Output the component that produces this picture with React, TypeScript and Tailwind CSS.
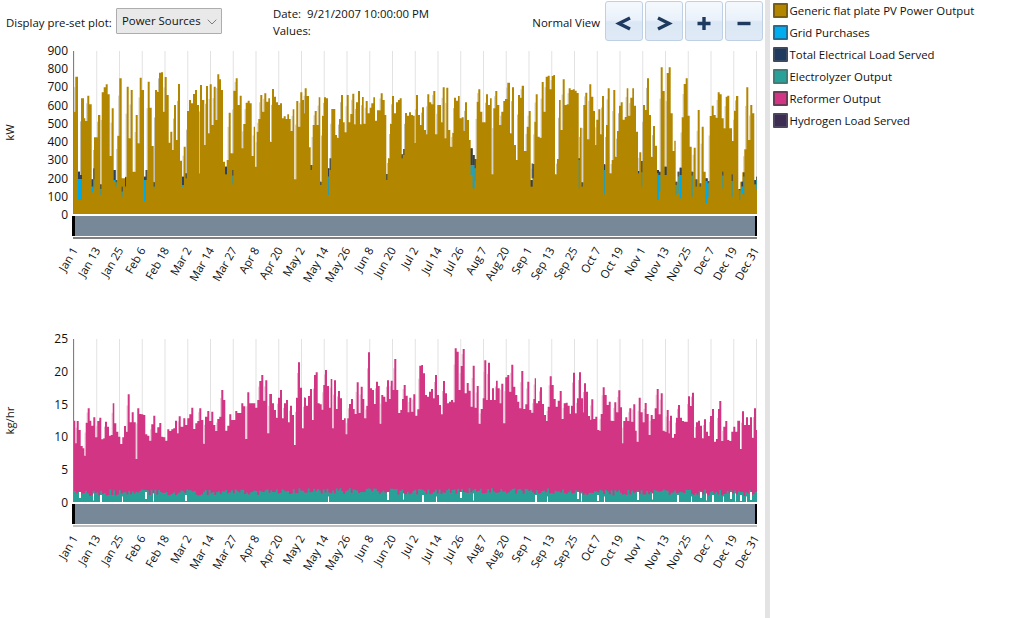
import { ChevronDown } from "lucide-react";

const FONT = "font-['Open_Sans','Noto_Sans',sans-serif]";

const DATES = [
  "Jan 1", "Jan 13", "Jan 25", "Feb 6", "Feb 18", "Mar 2", "Mar 14", "Mar 27", "Apr 8", "Apr 20", "May 2",
  "May 14", "May 26", "Jun 8", "Jun 20", "Jul 2", "Jul 14", "Jul 26", "Aug 7", "Aug 20", "Sep 1", "Sep 13",
  "Sep 25", "Oct 7", "Oct 19", "Nov 1", "Nov 13", "Nov 25", "Dec 7", "Dec 19", "Dec 31",
];

const LEGEND = [
  { label: "Generic flat plate PV Power Output", cls: "bg-[#b38600] border-[#7a5f10]" },
  { label: "Grid Purchases", cls: "bg-[#00aeef] border-[#1f6f96]" },
  { label: "Total Electrical Load Served", cls: "bg-[#1f3a5f] border-[#3b4a60]" },
  { label: "Electrolyzer Output", cls: "bg-[#2aa198] border-[#3f7f7a]" },
  { label: "Reformer Output", cls: "bg-[#d23583] border-[#6d3a58]" },
  { label: "Hydrogen Load Served", cls: "bg-[#3e2d53] border-[#4e4560]" },
];

// silhouettes read off the reference, "x:y" in crop pixels per strip
const POWER = [
  { x0: 70, s: "10:200 16:95 24:380 30:390 33:160 42:220 46:228 52:152 58:178 65:403 72:277 84:210 91:418 95:142 101:127 107:118 113:148 119:333 125:190 131:375 137:405 142:272 148:100 155:400 160:400 165:395 170:125 176:280 182:135 188:380 197:210 203:295 209:98 215:135 222:395 227:375 233:110 239:188 245:303 251:410 255:135 261:140 267:83 273:82 279:200 284:96 290:150 296:293 301:260 307:315 312:180 318:285 324:117 330:347 336:395 341:305 347:385 351:198 357:165 363:175 369:147 375:135 381:180 387:385 390:120 396:165 403:300 408:123 414:265 419:118 425:240 431:125 437:225 442:88 448:103 453:135 459:350 465:365 470:345 476:203 482:325 490:137 497:100 503:180 509:152 515:310 520:237 527:173 533:167 539:175 545:333 551:245 555:365 560:260 565:222 571:150 577:200 583:145 589:170 595:160 600:290 606:132 612:155 618:172 624:180 630:175 636:220 641:214 647:222 652:208 657:222 662:258 668:193 673:403 679:168 685:245 691:142 697:165 702:205" },
  { x0: 300, s: "14:130 20:153 27:307 32:360 38:240 44:198 50:240 56:157 61:410 66:212 72:157 78:160 84:370 89:340 94:192 100:192 106:270 111:278 117:222 123:150 129:232 134:262 140:150 146:232 151:207 157:146 163:238 168:172 174:138 180:238 186:156 191:236 197:168 203:205 209:188 214:175 220:157 225:227 231:196 237:196 242:145 248:165 254:210 259:387 264:340 270:236 276:153 282:205 288:172 294:165 299:160 305:328 310:312 315:204 321:212 327:202 333:210 339:212 344:294 348:150 354:210 360:240 366:187 372:255 378:268 382:148 388:172 394:178 400:138 406:268 412:180 417:180 423:232 428:127 434:280 439:128 445:255 451:305 457:263 462:158 468:167 474:153 479:220 485:217 491:257 495:172 501:225 507:285 512:310 518:330 524:342 530:170 535:133 541:200 547:232 552:232 558:148 564:180 570:160 575:388 580:190 586:138 592:180 598:240 604:200 610:168 615:162 622:113 630:265 636:127 642:300 648:345 654:150 660:158 665:122 672:318 680:245 686:198 692:405 698:357 703:230" },
  { x0: 530, s: "5:355 11:230 17:148 23:275 29:278 35:111 41:200 47:95 53:92 59:133 65:93 70:90 75:388 81:342 87:165 92:255 98:103 104:180 110:178 116:130 122:135 128:133 134:137 140:144 146:340 150:248 155:412 160:180 166:143 172:283 178:118 184:155 190:198 195:300 199:224 205:193 211:268 216:153 222:358 228:240 233:130 239:385 245:345 250:135 256:335 261:258 267:182 272:172 278:224 284:216 290:130 295:212 301:158 307:130 312:182 318:260 324:378 328:322 334:348 339:180 345:195 351:100 357:210 363:335 369:243 375:302 381:375 385:380 392:67 398:138 404:365 410:84 416:67 422:205 428:318 433:287 437:410 443:380 449:368 455:217 461:117 467:100 473:212 479:305 485:380 491:308 497:403 503:195 509:415 515:245 521:380 527:400 533:408 539:213 545:182 551:210 557:218 563:142 569:148 575:220 581:250 587:155 592:152 598:250 606:288 612:197 618:153 625:432 631:410 637:382 643:313 649:127 655:285 661:180 667:205 673:405 679:395" },
];

const HYDROGEN = [
  { x0: 70, s: "10:257 16:325 20:258 26:285 32:333 38:340 43:362 47:263 53:220 59:257 64:272 70:247 76:307 82:258 88:248 94:313 100:310 105:260 111:275 117:302 122:300 128:205 133:265 139:290 145:305 151:327 157:307 162:273 168:290 173:178 179:262 185:232 191:262 197:372 202:220 208:237 214:238 220:240 226:298 232:302 238:317 244:268 250:242 256:293 262:277 268:264 274:305 280:307 286:317 292:283 298:288 304:283 310:280 315:257 321:295 326:244 332:275 340:250 346:270 352:250 358:238 364:218 370:282 376:265 382:258 388:220 394:255 400:326 405:245 412:228 418:258 424:230 430:270 436:288 442:252 448:245 454:165 460:195 466:287 472:272 478:238 484:255 490:255 496:228 502:234 508:234 514:205 520:214 526:312 532:172 538:205 544:205 550:205 556:218 562:195 568:138 574:120 580:197 586:136 592:295 598:177 606:205 612:225 618:248 624:188 630:165 636:250 642:205 648:195 654:262 660:212 666:240 672:330 678:188 684:82 690:158 696:280 702:187" },
  { x0: 300, s: "14:188 18:212 24:183 30:162 36:255 42:120 47:112 53:205 59:208 65:224 70:150 75:105 81:153 87:218 92:132 97:280 102:136 108:222 114:168 120:190 126:255 132:250 137:298 142:250 147:207 153:192 159:222 164:237 170:142 176:234 182:155 188:192 193:250 199:212 204:52 210:160 216:165 222:207 228:140 234:153 239:266 244:180 250:185 256:200 261:136 267:192 272:137 278:165 283:72 289:165 295:234 301:225 306:192 311:150 317:182 323:232 328:188 334:230 340:178 346:242 352:223 358:92 364:90 369:115 375:180 381:185 387:170 393:162 399:190 405:120 411:180 417:210 423:238 429:138 435:175 441:205 447:200 453:195 459:202 464:40 470:50 476:165 482:93 488:42 494:175 500:144 506:167 512:215 518:92 524:218 530:153 536:266 542:222 548:190 553:76 559:195 564:83 570:195 576:160 582:195 588:137 593:160 599:205 604:146 610:265 616:127 622:120 628:170 634:89 640:155 646:180 652:200 658:220 664:108 670:222 676:208 682:140 688:225 694:233 700:192 704:130" },
  { x0: 530, s: "6:192 12:130 18:205 24:198 30:157 36:207 42:240 48:258 53:215 59:124 65:150 71:192 77:215 83:197 89:168 95:252 101:205 107:203 113:212 119:236 123:212 129:113 135:235 141:190 147:112 153:190 159:232 162:145 168:170 174:243 180:254 184:193 190:252 196:245 202:285 208:287 212:237 218:157 224:180 230:210 236:200 242:257 248:258 253:202 259:232 265:166 271:217 276:325 280:258 286:247 292:258 298:220 304:260 310:208 316:287 320:320 326:188 332:232 338:262 344:204 350:237 356:300 362:240 368:252 374:220 380:162 386:238 392:175 398:287 404:290 410:225 416:295 420:242 426:308 432:297 438:248 444:210 450:248 456:258 462:260 468:260 474:184 480:213 486:173 492:308 498:262 504:257 510:272 516:310 522:253 528:290 534:303 540:243 546:222 552:320 558:312 564:222 568:198 574:318 580:275 586:258 592:315 598:318 604:290 610:275 616:290 622:257 630:342 636:229 642:270 648:247 654:270 660:247 666:308 672:220 678:285" },
];

// x0, crop x, navy top, blue top, gold top, width
const DIPS: number[][] = [
  [70, 24, 380, 402, 465, 2], [70, 30, 390, 402, 465, 2], [70, 65, 403, 425, 442, 2], [70, 70, 370, 403, 430, 1],
  [70, 91, 418, 432, 450, 1], [70, 131, 375, 405, 408, 2], [70, 137, 405, 412, 425, 1], [70, 155, 425, 440, 455, 1],
  [70, 165, 397, 425, 428, 1], [70, 222, 395, 405, 470, 2], [70, 227, 375, 405, 405, 1], [70, 251, 412, 425, 430, 1],
  [70, 336, 395, 420, 425, 2], [70, 347, 385, 400, 400, 1], [70, 465, 365, 388, 388, 2], [70, 487, 375, 392, 418, 1],
  [300, 32, 360, 375, 375, 1], [300, 61, 410, 420, 420, 1], [300, 84, 370, 395, 450, 1], [300, 89, 340, 375, 375, 1],
  [300, 259, 387, 405, 405, 1], [300, 305, 328, 340, 340, 1], [300, 310, 312, 330, 330, 1], [300, 512, 310, 360, 390, 2],
  [300, 518, 330, 360, 430, 2], [300, 524, 342, 370, 408, 1], [300, 692, 405, 425, 425, 2], [300, 698, 357, 400, 400, 1],
  [530, 5, 355, 400, 400, 1], [530, 146, 340, 345, 430, 1], [530, 155, 412, 425, 425, 1], [530, 222, 358, 375, 448, 1],
  [530, 324, 378, 385, 385, 1], [530, 334, 348, 382, 425, 1], [530, 381, 375, 385, 465, 2], [530, 385, 380, 390, 440, 2],
  [530, 404, 365, 390, 390, 2], [530, 437, 410, 420, 450, 1], [530, 443, 380, 395, 445, 1], [530, 449, 368, 390, 460, 2],
  [530, 485, 380, 392, 455, 1], [530, 497, 403, 425, 425, 1], [530, 509, 415, 425, 425, 1], [530, 527, 400, 408, 475, 2],
  [530, 533, 408, 415, 458, 1], [530, 577, 380, 392, 430, 1], [530, 605, 388, 408, 455, 1], [530, 628, 432, 436, 465, 1],
  [530, 634, 410, 425, 445, 2], [530, 640, 382, 395, 450, 1], [530, 673, 405, 418, 418, 2], [530, 679, 395, 405, 435, 2],
];

const GAPS = [
  79, 93, 100, 122, 145, 153, 185, 328, 387, 403, 422, 436, 460, 473, 535, 547, 577, 581, 597, 604, 637, 652, 677, 691, 700, 706, 712, 723,
  730, 735, 740, 746, 750,
];

type Col = { x: number; y: number };

function readColumns(strips: { x0: number; s: string }[], yOf: (z: number) => number): Col[] {
  const cols: Col[] = [];
  let last = -1;
  for (const strip of strips) {
    for (const pair of strip.s.split(" ")) {
      const [zx, zy] = pair.split(":").map(Number);
      const x = strip.x0 + zx / 3 - 73;
      if (x <= last) continue;
      cols.push({ x: Math.max(x, 0), y: yOf(zy) });
      last = x;
    }
  }
  return cols;
}

function stepPath(cols: Col[], base: number) {
  let d = `M${cols[0].x} ${base}`;
  cols.forEach((c, i) => {
    const nx = i < cols.length - 1 ? cols[i + 1].x : 684;
    d += `L${c.x.toFixed(1)} ${c.y.toFixed(1)}L${nx.toFixed(1)} ${c.y.toFixed(1)}`;
  });
  return d + `L684 ${base}Z`;
}

function Slivers({ cols, color }: { cols: Col[]; color: string }) {
  return (
    <>
      {cols.map((c, i) => {
        const next = cols[i + 1];
        if (!next || c.y - next.y < 12) return null;
        return <rect key={i} x={next.x - 1} y={next.y + (c.y - next.y) * 0.3} width={1} height={(c.y - next.y) * 0.7} fill={color} />;
      })}
    </>
  );
}

function Grid() {
  return (
    <>
      {DATES.map((d, i) => (
        <rect key={d} x={0.5 + i * 22.75} y={0} width={1} height={163} fill="#e2e2e2" />
      ))}
    </>
  );
}

function PowerPlot() {
  const cols = readColumns(POWER, (z) => z / 3 - 6);
  return (
    <svg width={684} height={163} viewBox="0 0 684 163" className="block">
      <Grid />
      <Slivers cols={cols} color="#c4c0b0" />
      <path d={stepPath(cols, 163)} fill="#b38600" />
      {DIPS.map(([x0, zx, navy, blue, gold, w], i) => {
        const x = x0 + zx / 3 - 73;
        return (
          <g key={i}>
            <rect x={x} y={navy / 3 - 6} width={w} height={(blue - navy) / 3} fill="#2b4161" />
            <rect x={x} y={blue / 3 - 6} width={w} height={(gold - blue) / 3} fill={w > 1 ? "#00a8e6" : "#2f9aa8"} />
          </g>
        );
      })}
      <rect x={0} y={0} width={1} height={163} fill="#808080" />
    </svg>
  );
}

function HydrogenPlot() {
  const cols = readColumns(HYDROGEN, (z) => z / 3 - 4);
  const teal: Col[] = [];
  for (let x = 1; x < 684; x += 1.87) {
    const slow = Math.sin((x / 684) * Math.PI) * 2.5 + Math.sin(x / 31) * 0.6;
    const noise = Math.abs(Math.sin(x * 12.9898) * 43758.5453) % 1;
    teal.push({ x, y: 163 - (5.5 + slow + noise * 6) });
  }
  return (
    <svg width={684} height={163} viewBox="0 0 684 163" className="block">
      <Grid />
      <Slivers cols={cols} color="#e3b6cc" />
      <path d={stepPath(cols, 163)} fill="#d23583" />
      <path d={stepPath(teal, 163)} fill="#2aa198" />
      {GAPS.map((x, i) => (
        <rect key={x} x={x - 73} y={153 + (i % 4) * 1.5} width={i % 2 ? 1 : 2} height={6 + (i % 3)} fill="#ffffff" />
      ))}
      <rect x={0} y={0} width={1} height={163} fill="#808080" />
    </svg>
  );
}

function Chart({ unit, ticks, line, children }: { unit: string; ticks: number[]; line: string; children: React.ReactNode }) {
  return (
    <div className="flex h-[288px]">
      <div className="flex h-[163px] w-[19px] items-center justify-center">
        <span className="-rotate-90 whitespace-nowrap text-[11.4px]">{unit}</span>
      </div>
      <div className="-mt-2 flex h-[180px] w-[49px] flex-col justify-between text-right text-[12px] leading-4">
        {ticks.map((t) => (
          <span key={t}>{t}</span>
        ))}
      </div>
      <div className="ml-[5px] w-[684px]">
        {children}
        <div className="mt-[2px] -ml-px flex h-[20px] justify-between bg-[#778899]">
          <div className="w-[3px] bg-black" />
          <div className="w-[2px] bg-black" />
        </div>
        <div className={`mt-px h-[2px] ${line}`} />
        <div className="mt-[5px] mr-[7px] -ml-[5px] flex justify-between text-[11.4px] leading-4">
          {DATES.map((d) => (
            <div key={d} className="flex w-0 justify-end">
              <span className="origin-top-right -rotate-[60deg] whitespace-nowrap">{d}</span>
            </div>
          ))}
        </div>
      </div>
    </div>
  );
}

function NavButton({ d }: { d: string }) {
  return (
    <button className="flex h-10 w-[38px] items-center justify-center rounded-[3px] border border-[#bdd0e6] bg-[linear-gradient(#f5f9fd_0%,#e9f1fa_48%,#dbe7f5_52%,#e0eaf6_100%)]">
      <svg width={20} height={20} viewBox="0 0 20 20" fill="none" stroke="#1f3a5f" strokeWidth={3.4} className="mt-[7px]">
        <path d={d} />
      </svg>
    </button>
  );
}

export default function App() {
  return (
    <div className={`flex h-[618px] w-[1019px] overflow-hidden bg-white text-[11.4px] text-[#111] ${FONT}`}>
      <div className="w-[765px]">
        <div className="flex h-[51px] items-start">
          <span className="mt-[14px] ml-[6px] w-[110px] whitespace-nowrap">Display pre-set plot:</span>
          <div className="mt-[8px] flex h-[26px] w-[106px] items-start justify-between rounded-[1px] border border-[#adadad] bg-[#e9e9e9] pt-[3px] pr-[1px] pl-[5px]">
            <span className="whitespace-nowrap">Power Sources</span>
            <ChevronDown size={16} strokeWidth={1.1} className="mt-[2px] text-[#555]" />
          </div>
          <div className="mt-[5px] ml-[51px] flex flex-col leading-[17px]">
            <span className="whitespace-pre">Date:  9/21/2007 10:00:00 PM</span>
            <span>Values:</span>
          </div>
          <span className="mt-[14px] ml-auto whitespace-nowrap">Normal View</span>
          <div className="mt-px ml-[5px] mr-[2px] flex gap-[2px]">
            <NavButton d="M16 3 L5 8.5 L16 14" />
            <NavButton d="M4 3 L15 8.5 L4 14" />
            <NavButton d="M10 2 V15 M3.5 8.5 H16.5" />
            <NavButton d="M3.5 8.5 H16.5" />
          </div>
        </div>
        <Chart unit="kW" ticks={[900, 800, 700, 600, 500, 400, 300, 200, 100, 0]} line="bg-[#808080]">
          <PowerPlot />
        </Chart>
        <Chart unit="kg/hr" ticks={[25, 20, 15, 10, 5, 0]} line="bg-[#c0c0c0]">
          <HydrogenPlot />
        </Chart>
      </div>
      <div className="w-[5px] bg-[#e3e3e3]" />
      <div className="flex flex-col gap-[7px] pt-[3px] pl-[3px]">
        {LEGEND.map((item) => (
          <div key={item.label} className="flex h-[15px] items-center gap-[1.5px]">
            <div className={`size-[15px] rounded-[1px] border-2 ${item.cls}`} />
            <span className="mt-[1px] whitespace-nowrap">{item.label}</span>
          </div>
        ))}
      </div>
    </div>
  );
}
